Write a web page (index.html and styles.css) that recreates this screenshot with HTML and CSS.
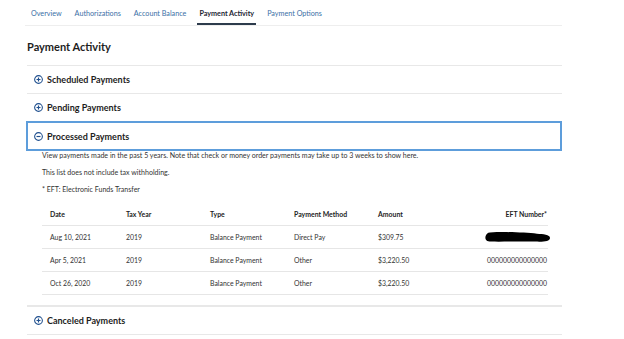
FILE: index.html
```html
<!DOCTYPE html>
<html lang="en">
<head>
<meta charset="utf-8">
<title>Payment Activity</title>
<link rel="stylesheet" href="styles.css">
</head>
<body>
<div class="page">
  <nav class="tabs">
    <a class="tab" href="#">Overview</a>
    <a class="tab" href="#">Authorizations</a>
    <a class="tab" href="#">Account Balance</a>
    <a class="tab active" href="#">Payment Activity</a>
    <a class="tab" href="#">Payment Options</a>
  </nav>

  <h1 class="title">Payment Activity</h1>

  <div class="accordion">
    <section class="acc-item">
      <div class="acc-head">
        <svg class="acc-icon" viewBox="0 0 10 10"><circle cx="5" cy="5" r="4.3"/><path d="M5 2.8v4.4M2.8 5h4.4"/></svg>
        <span>Scheduled Payments</span>
      </div>
    </section>
    <section class="acc-item">
      <div class="acc-head">
        <svg class="acc-icon" viewBox="0 0 10 10"><circle cx="5" cy="5" r="4.3"/><path d="M5 2.8v4.4M2.8 5h4.4"/></svg>
        <span>Pending Payments</span>
      </div>
    </section>
    <section class="acc-item open">
      <div class="acc-head focused">
        <svg class="acc-icon" viewBox="0 0 10 10"><circle cx="5" cy="5" r="4.3"/><path d="M2.8 5h4.4"/></svg>
        <span>Processed Payments</span>
      </div>
      <div class="acc-body">
        <p class="note">View payments made in the past 5 years. Note that check or money order payments may take up to 3 weeks to show here.</p>
        <p class="note">This list does not include tax withholding.</p>
        <p class="note">* EFT: Electronic Funds Transfer</p>
        <table class="payments">
          <thead>
            <tr><th class="c-date">Date</th><th class="c-col">Tax Year</th><th class="c-col">Type</th><th class="c-col">Payment Method</th><th class="c-col">Amount</th><th class="num">EFT Number*</th></tr>
          </thead>
          <tbody>
            <tr><td>Aug 10, 2021</td><td>2019</td><td>Balance Payment</td><td>Direct Pay</td><td>$309.75</td><td class="num"><svg class="redact" viewBox="0 0 66 12"><path d="M5 1.5 C20 0.5 40 1.5 52 2.8 C58 3.2 65 3.5 65 7 C65 10.5 58 11 50 10.6 C36 10 20 11 6 10.6 C1 10.4 0 8 0.5 5.6 C1 3 2.5 1.7 5 1.5Z"/></svg></td></tr>
            <tr><td>Apr 5, 2021</td><td>2019</td><td>Balance Payment</td><td>Other</td><td>$3,220.50</td><td class="num">000000000000000</td></tr>
            <tr><td>Oct 26, 2020</td><td>2019</td><td>Balance Payment</td><td>Other</td><td>$3,220.50</td><td class="num">000000000000000</td></tr>
          </tbody>
        </table>
      </div>
    </section>
    <section class="acc-item last">
      <div class="acc-head">
        <svg class="acc-icon" viewBox="0 0 10 10"><circle cx="5" cy="5" r="4.3"/><path d="M5 2.8v4.4M2.8 5h4.4"/></svg>
        <span>Canceled Payments</span>
      </div>
    </section>
  </div>
</div>
</body>
</html>
```

FILE: styles.css
```css
html, body {
  margin: 0;
  padding: 0;
  background: #ffffff;
}

body {
  font-family: "Lato", "Liberation Sans", sans-serif;
  color: #333333;
}

.page {
  width: 535px;
  padding-left: 27px;
}

.tabs {
  display: flex;
  gap: 9px;
  height: 25px;
  margin-left: -2px;
  padding-left: 4px;
  border-bottom: 1px solid #eeeeee;
}

.tab {
  display: flex;
  align-items: center;
  height: 20px;
  padding: 3px 2px 0;
  border-bottom: 2px solid transparent;
  font-size: 7.2px;
  color: #3b6fa6;
  text-decoration: none;
  white-space: nowrap;
}

.tab.active {
  color: #1c2633;
  font-weight: 700;
  border-bottom-color: #2d3b4c;
}

.title {
  margin: 13px 0 11px;
  font-size: 11px;
  line-height: 15px;
  font-weight: 700;
  color: #1d1d1d;
}

.acc-item {
  border-top: 1px solid #e8e8e8;
}

.acc-item.open {
  border-top: none;
}

.acc-item.last {
  border-bottom: 1px solid #e8e8e8;
}

.acc-head {
  display: flex;
  align-items: center;
  gap: 4px;
  height: 27px;
  padding-left: 7px;
  font-size: 9px;
  font-weight: 700;
  color: #1d1d1d;
}

.acc-head.focused {
  box-sizing: border-box;
  height: 30px;
  margin-left: -1px;
  padding-left: 6px;
  border: 2px solid #5d9ddb;
}

.acc-icon {
  width: 9px;
  height: 9px;
  flex: none;
}

.acc-icon circle {
  fill: #ffffff;
  stroke: #1f4f8e;
  stroke-width: 1.2;
}

.acc-icon path {
  stroke: #1f4f8e;
  stroke-width: 1.3;
  fill: none;
}

.acc-body {
  padding: 0 14px 10px 15px;
  border-bottom: 1px solid #e8e8e8;
}

.note {
  margin: 0 0 7px;
  font-size: 7.05px;
  line-height: 10px;
  color: #333333;
}

.note:last-of-type {
  margin-bottom: 0;
}

.payments {
  width: 506px;
  margin-top: 8px;
  border-collapse: collapse;
  table-layout: fixed;
  font-size: 6.9px;
}

.payments th,
.payments td {
  box-sizing: border-box;
  height: 23px;
  padding: 0 0 0 8px;
  text-align: left;
  white-space: nowrap;
  border-bottom: 1px solid #e6e6e6;
}

.payments .c-date { width: 76px; }
.payments .c-col { width: 84px; }

.payments th {
  height: 22px;
  font-weight: 700;
  color: #1d1d1d;
}

.payments td {
  color: #333333;
}

.payments .num {
  text-align: right;
  padding-right: 1px;
}

.redact {
  display: inline-block;
  width: 66px;
  height: 12px;
  margin-right: -4px;
  vertical-align: middle;
}

.redact path {
  fill: #000000;
}
```
